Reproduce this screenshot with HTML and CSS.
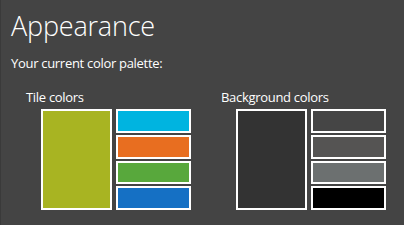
FILE: index.html
```html
<!DOCTYPE html>
<html>
<head>
<meta charset="utf-8">
<link rel="stylesheet" href="styles.css">
</head>
<body>
<div class="page">
  <h1 class="title">Appearance</h1>
  <p class="subtitle">Your current color palette:</p>
  <div class="palettes">
    <section class="group">
      <h2 class="label">Tile colors</h2>
      <div class="tiles">
        <div class="tile big c-lime"></div>
        <div class="stack">
          <div class="tile c-cyan"></div>
          <div class="tile c-orange"></div>
          <div class="tile c-green"></div>
          <div class="tile c-blue"></div>
        </div>
      </div>
    </section>
    <section class="group">
      <h2 class="label">Background colors</h2>
      <div class="tiles">
        <div class="tile big c-dark"></div>
        <div class="stack">
          <div class="tile c-g1"></div>
          <div class="tile c-g2"></div>
          <div class="tile c-g3"></div>
          <div class="tile c-black"></div>
        </div>
      </div>
    </section>
  </div>
</div>
</body>
</html>
```
FILE: styles.css
```css
html, body {
  margin: 0;
  padding: 0;
  background: #444444;
}
body {
  width: 404px;
  height: 225px;
  overflow: hidden;
  font-family: "Open Sans", "Noto Sans", sans-serif;
  color: #ffffff;
  border-left: 1px solid #3a3a3a;
  box-sizing: border-box;
}
.page {
  padding: 8px 0 0 10px;
}
.title {
  margin: 0;
  font-size: 27px;
  font-weight: 300;
  line-height: 36px;
  letter-spacing: -0.2px;
}
.subtitle {
  margin: 9px 0 0 0;
  font-size: 13px;
  line-height: 20px;
  letter-spacing: -0.3px;
}
.palettes {
  display: flex;
  margin-top: 15px;
  padding-left: 15px;
}
.group {
  width: 195px;
  flex-shrink: 0;
}
.label {
  margin: 0;
  font-size: 13px;
  font-weight: 400;
  line-height: 18px;
  letter-spacing: -0.3px;
}
.tiles {
  display: flex;
  gap: 4px;
  margin: 3px 0 0 15px;
}
.tile {
  border: 2px solid #ffffff;
  box-sizing: border-box;
}
.big {
  width: 71px;
  height: 101px;
}
.stack {
  display: flex;
  flex-direction: column;
  gap: 2px;
  width: 75px;
  height: 101px;
}
.stack .tile {
  flex: 1;
}
.c-lime { background: #a8b422; }
.c-cyan { background: #00b4e0; }
.c-orange { background: #e86e20; }
.c-green { background: #58a83c; }
.c-blue { background: #1570c4; }
.c-dark { background: #333333; }
.c-g1 { background: #454545; }
.c-g2 { background: #555453; }
.c-g3 { background: #6c7070; }
.c-black { background: #000000; }
```
